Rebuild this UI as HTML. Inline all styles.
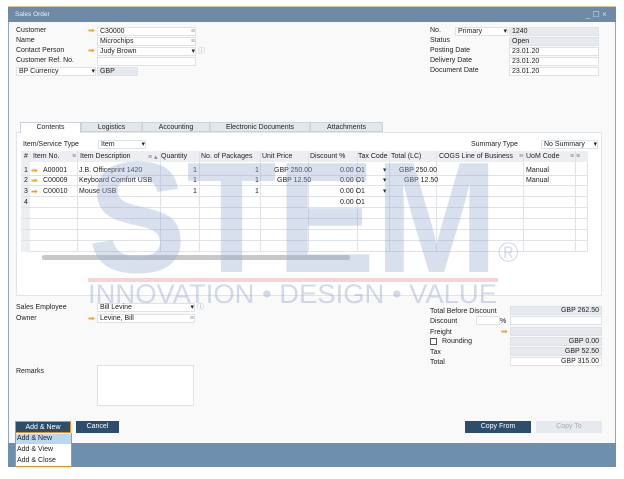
<!DOCTYPE html>
<html><head><meta charset="utf-8"><style>
*{margin:0;padding:0;box-sizing:border-box}
body{width:624px;height:479px;background:#fff;font-family:"Liberation Sans",sans-serif;font-size:7px;color:#222;position:relative;overflow:hidden}
.a{position:absolute;white-space:nowrap}
.f{position:absolute;background:#fff;border:1px solid #dde2e8;height:9px;line-height:8px;padding-left:2px;white-space:nowrap}
.g{background:#e6e9ed}
.ar{color:#f0a020;font-size:8px}
.tab{position:absolute;top:122px;height:10px;line-height:10px;text-align:center;background:#e3e7ec;border:1px solid #ccd2d9;font-size:7px}
.btn{position:absolute;height:12px;line-height:12px;color:#fff;background:#2d4d6c;text-align:center;font-size:7px}
.hl{position:absolute;height:1px;background:#dfe3e8}
.vl{position:absolute;width:1px;background:#dfe3e8}
.r{text-align:right}
</style></head><body>
<div class="a" style="left:8px;top:7px;width:608px;height:460px;background:#f9f9f9;border:1px solid #8fa6bf"></div>
<div class="a" style="left:8px;top:6px;width:608px;height:1px;background:#d9c49a"></div>
<div class="a" style="left:8px;top:7px;width:608px;height:15px;background:#6f8aa6;color:#eef;line-height:15px;padding-left:7px;font-size:6.5px">Sales Order</div>
<div class="a" style="left:586px;top:7px;color:#dde;line-height:15px;font-size:8px">_ ☐ ×</div>
<div class="a" style="left:8px;top:443px;width:608px;height:24px;background:#6f8fae"></div>

<div class="a" style="left:16px;top:27px">Customer</div><div class="a ar" style="left:88px;top:26px">➡</div><div class="f" style="left:97px;top:27px;width:99px">C30000<span style="float:right;color:#999">≡ </span></div>
<div class="a" style="left:16px;top:37px">Name</div><div class="f" style="left:97px;top:37px;width:99px">Microchips<span style="float:right;color:#999">≡ </span></div>
<div class="a" style="left:16px;top:47px">Contact Person</div><div class="a ar" style="left:88px;top:46px">➡</div><div class="f" style="left:97px;top:47px;width:99px">Judy Brown<span style="float:right">▾ </span></div><div class="a" style="left:198px;top:46px;color:#8ab">ⓘ</div>
<div class="a" style="left:16px;top:57px">Customer Ref. No.</div><div class="f" style="left:97px;top:57px;width:99px"></div>
<div class="f" style="left:16px;top:67px;width:80px">BP Currency<span style="float:right">▾ </span></div><div class="f g" style="left:97px;top:67px;width:41px">GBP</div>

<div class="a" style="left:430px;top:27px">No.</div><div class="f" style="left:455px;top:27px;width:53px">Primary<span style="float:right">▾ </span></div><div class="f g" style="left:509px;top:27px;width:90px">1240</div>
<div class="a" style="left:430px;top:37px">Status</div><div class="f g" style="left:509px;top:37px;width:90px">Open</div>
<div class="a" style="left:430px;top:47px">Posting Date</div><div class="f" style="left:509px;top:47px;width:90px">23.01.20</div>
<div class="a" style="left:430px;top:57px">Delivery Date</div><div class="f" style="left:509px;top:57px;width:90px">23.01.20</div>
<div class="a" style="left:430px;top:67px">Document Date</div><div class="f" style="left:509px;top:67px;width:90px">23.01.20</div>

<div class="a" style="left:16px;top:132px;width:586px;height:164px;background:#fff;border:1px solid #e1e5ea"></div>
<div class="tab" style="left:20px;width:61px;background:#fff;border-bottom:none;height:11px">Contents</div>
<div class="tab" style="left:81px;width:61px">Logistics</div>
<div class="tab" style="left:142px;width:68px">Accounting</div>
<div class="tab" style="left:210px;width:100px">Electronic Documents</div>
<div class="tab" style="left:310px;width:73px">Attachments</div>

<div class="a" style="left:23px;top:141px">Item/Service Type</div><div class="f" style="left:98px;top:140px;width:48px">Item<span style="float:right">▾ </span></div>
<div class="a" style="left:471px;top:141px">Summary Type</div><div class="f" style="left:541px;top:140px;width:57px">No Summary<span style="float:right">▾ </span></div>

<div class="a" style="left:21px;top:151px;width:567px;height:101px;background:#fff;border:1px solid #dfe3e8"></div>
<div class="a" style="left:21px;top:151px;width:567px;height:11px;background:#eceef1"></div>
<div class="a" style="left:21px;top:151px;width:9px;height:101px;background:#eceef1"></div>
<div class="a" style="left:24px;top:153px">#</div>
<div class="a" style="left:33px;top:153px">Item No.</div><div class="a" style="left:72px;top:153px;color:#888">≡</div>
<div class="a" style="left:80px;top:153px">Item Description</div><div class="a" style="left:148px;top:153px;color:#888">≡ ▴</div>
<div class="a" style="left:161px;top:153px">Quantity</div>
<div class="a" style="left:201px;top:153px">No. of Packages</div>
<div class="a" style="left:262px;top:153px">Unit Price</div>
<div class="a" style="left:310px;top:153px">Discount %</div>
<div class="a" style="left:358px;top:153px">Tax Code</div>
<div class="a" style="left:391px;top:153px">Total (LC)</div>
<div class="a" style="left:439px;top:153px">COGS Line of Business</div><div class="a" style="left:519px;top:153px;color:#888">≡</div>
<div class="a" style="left:526px;top:153px">UoM Code</div><div class="a" style="left:570px;top:153px;color:#888">≡ ≡</div>
<div class="vl" style="left:77px;top:151px;height:101px"></div>
<div class="vl" style="left:160px;top:151px;height:101px"></div>
<div class="vl" style="left:199px;top:151px;height:101px"></div>
<div class="vl" style="left:260px;top:151px;height:101px"></div>
<div class="vl" style="left:308px;top:151px;height:101px"></div>
<div class="vl" style="left:357px;top:151px;height:101px"></div>
<div class="vl" style="left:389px;top:151px;height:101px"></div>
<div class="vl" style="left:436px;top:151px;height:101px"></div>
<div class="vl" style="left:523px;top:151px;height:101px"></div>
<div class="vl" style="left:575px;top:151px;height:101px"></div>
<div class="hl" style="left:21px;top:175px;width:567px"></div>
<div class="hl" style="left:21px;top:185px;width:567px"></div>
<div class="hl" style="left:21px;top:196px;width:567px"></div>
<div class="hl" style="left:21px;top:207px;width:567px"></div>
<div class="hl" style="left:21px;top:218px;width:567px"></div>
<div class="hl" style="left:21px;top:229px;width:567px"></div>
<div class="hl" style="left:21px;top:240px;width:567px"></div>

<div class="a" style="left:24px;top:167px">1</div><div class="a ar" style="left:31px;top:166px">➡</div><div class="a" style="left:43px;top:167px">A00001</div><div class="a" style="left:79px;top:167px">J.B. Officeprint 1420</div><div class="a" style="left:193px;top:167px">1</div><div class="a" style="left:255px;top:167px">1</div><div class="a" style="left:274px;top:167px">GBP 250.00</div><div class="a" style="left:340px;top:167px">0.00 O1</div><div class="a" style="left:383px;top:166px">▾</div><div class="a" style="left:399px;top:167px">GBP 250.00</div><div class="a" style="left:526px;top:167px">Manual</div>
<div class="a" style="left:24px;top:177px">2</div><div class="a ar" style="left:31px;top:176px">➡</div><div class="a" style="left:43px;top:177px">C00009</div><div class="a" style="left:79px;top:177px">Keyboard Comfort USB</div><div class="a" style="left:193px;top:177px">1</div><div class="a" style="left:255px;top:177px">1</div><div class="a" style="left:277px;top:177px">GBP 12.50</div><div class="a" style="left:340px;top:177px">0.00 O1</div><div class="a" style="left:383px;top:176px">▾</div><div class="a" style="left:404px;top:177px">GBP 12.50</div><div class="a" style="left:526px;top:177px">Manual</div>
<div class="a" style="left:24px;top:188px">3</div><div class="a ar" style="left:31px;top:187px">➡</div><div class="a" style="left:43px;top:188px">C00010</div><div class="a" style="left:79px;top:188px">Mouse USB</div><div class="a" style="left:193px;top:188px">1</div><div class="a" style="left:255px;top:188px">1</div><div class="a" style="left:340px;top:188px">0.00 O1</div><div class="a" style="left:383px;top:187px">▾</div>
<div class="a" style="left:24px;top:199px">4</div><div class="a" style="left:340px;top:199px">0.00 O1</div>
<div class="a" style="left:42px;top:255px;width:308px;height:5px;background:#c8c8c8;border-radius:2px"></div>

<svg class="a" style="left:0;top:0" width="624" height="479">
<text x="88" y="272" font-family="Liberation Sans" font-weight="bold" font-size="158" fill="#98abd0" fill-opacity="0.38" textLength="410" lengthAdjust="spacingAndGlyphs">STEM</text>
<text x="498" y="262" font-family="Liberation Sans" font-size="28" fill="#98abd0" fill-opacity="0.4">®</text>
<rect x="88" y="278" width="410" height="4" fill="#f2b8b8" fill-opacity="0.6"/>
<text x="88" y="303" font-family="Liberation Sans" font-size="27" fill="#98abd0" fill-opacity="0.45" textLength="409" lengthAdjust="spacingAndGlyphs">INNOVATION • DESIGN • VALUE</text>
</svg>

<div class="a" style="left:16px;top:304px">Sales Employee</div><div class="f" style="left:97px;top:303px;width:98px">Bill Levine<span style="float:right">▾ </span></div><div class="a" style="left:197px;top:302px;color:#8ab">ⓘ</div>
<div class="a" style="left:16px;top:315px">Owner</div><div class="a ar" style="left:88px;top:314px">➡</div><div class="f" style="left:97px;top:314px;width:98px">Levine, Bill<span style="float:right;color:#999">≡ </span></div>
<div class="a" style="left:16px;top:368px">Remarks</div><div class="f" style="left:97px;top:365px;width:97px;height:41px"></div>

<div class="a" style="left:430px;top:308px">Total Before Discount</div><div class="f g r" style="left:510px;top:306px;width:92px;padding-right:2px">GBP 262.50</div>
<div class="a" style="left:430px;top:318px">Discount</div><div class="f" style="left:476px;top:316px;width:24px"></div><div class="a" style="left:500px;top:318px">%</div><div class="f" style="left:510px;top:316px;width:92px"></div>
<div class="a" style="left:430px;top:329px">Freight</div><div class="a ar" style="left:501px;top:327px">➡</div><div class="f g" style="left:510px;top:327px;width:92px"></div>
<div class="a" style="left:430px;top:338px;width:7px;height:7px;border:1px solid #555;background:#fff"></div><div class="a" style="left:442px;top:338px">Rounding</div><div class="f g r" style="left:510px;top:337px;width:92px;padding-right:2px">GBP 0.00</div>
<div class="a" style="left:430px;top:349px">Tax</div><div class="f g r" style="left:510px;top:347px;width:92px;padding-right:2px">GBP 52.50</div>
<div class="a" style="left:430px;top:359px">Total</div><div class="f r" style="left:510px;top:357px;width:92px;padding-right:2px">GBP 315.00</div>

<div class="btn" style="left:15px;top:421px;width:56px;border:1px solid #f08a1c">Add &amp; New</div>
<div class="btn" style="left:76px;top:421px;width:43px">Cancel</div>
<div class="btn" style="left:465px;top:421px;width:66px">Copy From</div>
<div class="btn" style="left:536px;top:421px;width:66px;background:#e6e9ed;color:#aab">Copy To</div>
<div class="a" style="left:15px;top:433px;width:57px;height:34px;background:#fff;border:1px solid #f08a1c;border-top:none"></div>
<div class="a" style="left:16px;top:434px;width:55px;height:10px;background:#b9d7f2;padding-left:1px;line-height:10px">Add &amp; New</div>
<div class="a" style="left:17px;top:446px">Add &amp; View</div>
<div class="a" style="left:17px;top:457px">Add &amp; Close</div>
</body></html>
